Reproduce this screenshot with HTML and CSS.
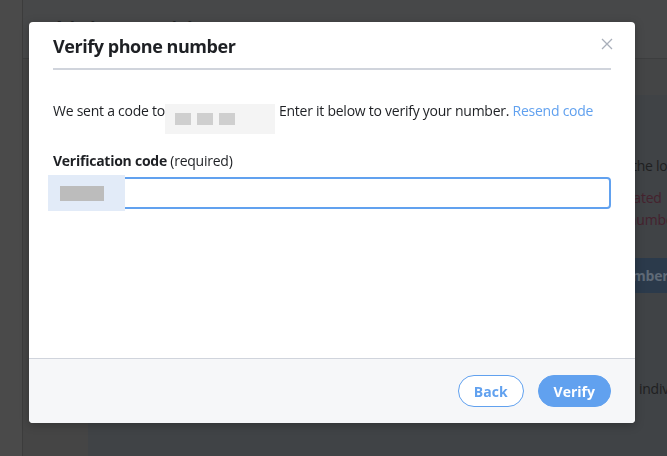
FILE: index.html
```html
<!DOCTYPE html>
<html lang="en">
<head>
    <meta charset="UTF-8">
    <meta name="viewport" content="width=device-width, initial-scale=1.0">
    <title>Verify phone number</title>
    <link rel="stylesheet" href="styles.css">
</head>
<body>

<!-- page behind the dialog (already dimmed) -->
<div class="app">
  <div class="rail"></div>
  <div class="page">
    <header class="page-head">
      <h1>This is your visit ID</h1>
    </header>
    <div class="page-body">
      <aside class="side"></aside>
      <main class="content">
        <div class="card">
          <div class="card-left"></div>
          <div class="card-right">
            <p class="dim">the long number</p>
            <p class="warn">
              <span class="warn__a">Associated</span>
              <span class="warn__b">numbers</span>
            </p>
            <span class="ghost-btn">Number</span>
            <p class="dim low">individual</p>
          </div>
        </div>
      </main>
    </div>
  </div>
</div>

<div class="overlay">
  <div class="modal" role="dialog" aria-labelledby="modal-title">
    <div class="modal__head">
      <h2 id="modal-title">Verify phone number</h2>
      <button class="close" aria-label="Close">
        <svg width="12" height="12" viewBox="0 0 12 12"><path d="M1 1 L11 11 M11 1 L1 11" stroke="#a9afba" stroke-width="1.3" fill="none"/></svg>
      </button>
    </div>

    <div class="modal__body">
      <p class="lead">
        We sent a code to<span class="redact redact--phone"><i></i><i></i><i></i></span>Enter it below to verify your number. <a href="#">Resend code</a>
      </p>

      <label class="field-label" for="code"><b>Verification code</b> (required)</label>
      <div class="field">
        <span class="redact redact--code"><i></i></span>
        <input id="code" type="text">
      </div>
    </div>

    <div class="modal__foot">
      <button class="btn btn--outline">Back</button>
      <button class="btn btn--solid">Verify</button>
    </div>
  </div>
</div>

</body>
</html>
```

FILE: styles.css
```css
:root {
    --clr-blue: hsl(213, 82%, 66%);
    --clr-text: hsl(220, 10%, 13%);
    --clr-line: hsl(222, 14%, 84%);
    --clr-foot: hsl(220, 20%, 97%);
}

* {
    box-sizing: border-box;
}

html,
body {
    margin: 0;
    height: 100%;
}

body {
    font-family: "Open Sans", "Noto Sans", sans-serif;
    font-size: 14px;
    letter-spacing: -0.25px;
    color: var(--clr-text);
    overflow: hidden;
}

/* page behind */

.app {
    display: flex;
    height: 100%;
}

.rail {
    width: 23px;
    flex: none;
    background: #4a4a4a;
    border-right: 1px solid #3c3c3c;
}

.page {
    flex: 1;
    display: flex;
    flex-direction: column;
    background: #474849;
}

.page-head {
    height: 59px;
    padding: 15px 22px 0;
    border-bottom: 1px solid #3d3e3f;
}

.page-head h1 {
    margin: 0;
    font-size: 20px;
    color: #232425;
}

.page-body {
    flex: 1;
    display: flex;
}

.side {
    width: 65px;
    background: #454545;
}

.content {
    flex: 1;
    padding-top: 36px;
    background: #444546;
}

.card {
    display: flex;
    height: 100%;
    background: #404346;
}

.card-left {
    width: 544px;
    flex: none;
}

.card-right {
    padding-top: 61px;
    color: #1f2021;
    white-space: nowrap;
}

.card-right p {
    margin: 0;
}

.warn {
    margin-top: 12px !important;
    color: #45222e;
    line-height: 22px;
}

.warn__a {
    display: block;
    margin-left: -38px;
}

.warn__b {
    display: block;
    margin-left: -4px;
}

.ghost-btn {
    display: inline-block;
    margin: 27px 0 0 -26px;
    padding: 8px 4px 8px 6px;
    background: #2b3a4b;
    color: #5f6a77;
    font-weight: 700;
}

.low {
    margin: 86px 0 0 7px !important;
}

/* dialog */

.overlay {
    position: fixed;
    inset: 0;
    padding: 22px 32px 0 29px;
}

.modal {
    width: 606px;
    height: 401px;
    display: flex;
    flex-direction: column;
    background: #fff;
    border-radius: 4px;
    overflow: hidden;
    box-shadow: 0 2px 10px rgba(0, 0, 0, 0.25);
}

.modal__head {
    display: flex;
    justify-content: space-between;
    align-items: flex-start;
    margin: 0 24px;
    padding: 12px 0 10px;
    border-bottom: 2px solid var(--clr-line);
}

.modal__head h2 {
    margin: 0;
    font-size: 18px;
    font-weight: 700;
    letter-spacing: -0.45px;
    line-height: 24px;
}

.close {
    margin: 4px -2px 0 0;
    padding: 0;
    border: 0;
    background: none;
    line-height: 0;
}

.modal__body {
    flex: 1;
    padding: 30px 24px 0;
}

.lead {
    margin: 0;
    line-height: 22px;
}

.lead a {
    color: var(--clr-blue);
    text-decoration: none;
}

.redact {
    display: inline-flex;
    align-items: center;
    gap: 6px;
    background: #f4f4f4;
}

.redact--phone {
    width: 110px;
    height: 30px;
    padding-left: 10px;
    vertical-align: -9px;
    margin-right: 4px;
}

.redact i {
    width: 16px;
    height: 12px;
    background: #cfcfcf;
}

.field-label {
    display: block;
    margin-top: 17px;
    line-height: 20px;
}

.field {
    position: relative;
    margin: 6px 0 0;
}

.field input {
    display: block;
    width: 100%;
    height: 32px;
    border: 2px solid var(--clr-blue);
    border-radius: 4px;
    font: inherit;
    outline: none;
}

.redact--code {
    position: absolute;
    left: -5px;
    top: -2px;
    width: 77px;
    height: 36px;
    padding-left: 12px;
    background: #e2ebf8;
}

.redact--code i {
    width: 44px;
    height: 15px;
    background: #bcbcbc;
}

.modal__foot {
    display: flex;
    justify-content: flex-end;
    gap: 14px;
    height: 65px;
    padding: 16px 24px 0;
    background: var(--clr-foot);
    border-top: 1px solid var(--clr-line);
}

.btn {
    height: 32px;
    padding: 0 15px;
    border-radius: 16px;
    font: inherit;
    font-weight: 700;
}

.btn--outline {
    background: #fff;
    color: var(--clr-blue);
    border: 1px solid var(--clr-blue);
}

.btn--solid {
    background: var(--clr-blue);
    color: #fff;
    border: 1px solid var(--clr-blue);
}
```
